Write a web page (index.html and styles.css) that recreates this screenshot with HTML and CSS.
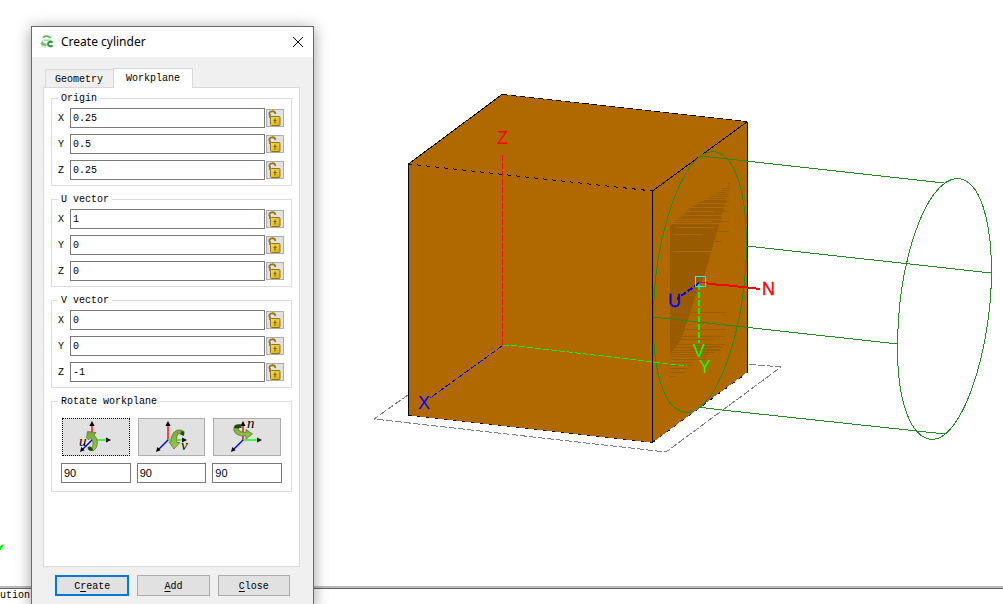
FILE: index.html
```html
<!DOCTYPE html>
<html lang="en">
<head>
<meta charset="utf-8">
<title>Create cylinder</title>
<link rel="stylesheet" href="styles.css">
</head>
<body>
<svg class="sprites" aria-hidden="true">
  <defs>
    <linearGradient id="gold" x1="0" y1="0" x2="1" y2="1"><stop offset="0" stop-color="#f3dd62"/><stop offset="1" stop-color="#d9ae10"/></linearGradient>
    <linearGradient id="leaf" x1="0" y1="0" x2="0" y2="1"><stop offset="0" stop-color="#7da63c"/><stop offset="1" stop-color="#9cc652"/></linearGradient>
    <symbol id="lock" viewBox="0 0 16 16">
      <path d="M3 8V5C1.500 4 2.500 1.500 5 1.300C7 1.100 8.300 2 8.300 4" fill="none" stroke="#94780f" stroke-width="1.800"/>
      <rect x="3.500" y="6.500" width="9.500" height="9" rx="1" fill="url(#gold)" stroke="#93740b"/>
      <path d="M8 8.500v5M6.500 10.500h3" stroke="#80640c" stroke-width="1.200"/>
    </symbol>
    <symbol id="axes" viewBox="0 0 68 38">
      <path d="M30 22V7" stroke="#f00" stroke-width="1.400"/>
      <path d="M30 22h16" stroke="#0f0" stroke-width="1.400"/>
      <path d="M30 22L20 32" stroke="#00f" stroke-width="1.400"/>
      <path d="M30 3l-2.600 5h5.200zM49 22l-5-2.600v5.200zM18 34l1.300-5 3.300 3.300z" fill="#000"/>
    </symbol>
  </defs>
</svg>

<main class="viewport">
  <svg class="scene" role="img" aria-label="Brick with cylinder preview">
    <g class="crisp thin">
      <path class="ground" d="M408 395L374 419L666 452L781 367L747 364"/>
      <path class="brick" d="M502 94.500L747.500 121.500V372L652.500 442.500L408.500 415.500V164z"/>
      <path class="shade" d="M670 225H719L713 245L709 260L704 276L699 288L694 300L690 313L685 329L679 343L670 354z"/>
      <path class="shade-lines" d="M728 183.500h2M727 186.500h2M722 188.500h7M722 190.500h7M716 192.500h11M717 194.500h12M711 196.500h17M708 198.500h18M704 200.500h23M698 202.500h28M697 204.500h27M692 206.500h36M688 208.500h36M687 210.500h38M684 212.500h38M683 214.500h39M681 216.500h41M678 218.500h44M675 220.500h46M674 222.500h46M672 224.500h47M712 231.500h17M709 241.500h13M712 221.500h17M714 211.500h15M712 201.500h17M674 312.500h53M671 329.500h55M671 336.500h54M671 339.500h42M670 344.500h56M671 347.500h52M670 350.500h50M670 352.500h45M670 354.500h38M671 356.500h36M671 359.500h34M670 362.500h24M671 365.500h22M670 368.500h18M671 372.500h14M670 376.500h6M700 201.500h25M695 205.500h30M690 209.500h34M685 213.500h37M680 217.500h41M690 349.500h30M694 346.500h26"/>
      <path class="seam" d="M675 227.500h40M673 234.500h30M673 251.500h38"/>
      <path class="edge" d="M502 94.500L408.500 164V415.500M652.500 191V442.500M747.500 121.500V373M747.500 121.500L652.500 191"/>
      <path class="edge front" d="M408.500 164L652.500 191"/>
      <path class="edge back" d="M502 94.500L747.500 121.500"/>
      <path class="edge back low" d="M408.500 415.500L652.500 442.500M652.500 442.500L747.500 372.500"/>
      <path class="cylinder" d="M701 156L719 158 944 183M747 246L991 273M653 317L898 344M698 407L722 410 945 434"/>
      <path class="cylinder" d="M957 178.500C980 179 991.500 220 991.500 273C991 350 963 438 933 439.500C910 439 897 400 897.500 344C898 264 925 180 957 178.500z"/>
      <path class="cylinder" d="M712 151.500C736 152 746.500 195 746.500 246C746 325 718 411 688 412.500C664 412 652.500 373 653.500 317C654 237 682 153 712 151.500z"/>
      <path class="axis-z" d="M502.500 155V345"/>
      <path class="axis-x" d="M502 346L430 398"/>
      <path class="axis-y" d="M503 345L518 346 687 366"/>
      <path class="axis-u" d="M699 283L677 299"/>
      <path class="axis-v" d="M699 284V343"/>
      <path class="axis-n" d="M700 282.500L715 283.500"/>
      <path class="axis-n thick" d="M707 284L725 285L760 289"/>
      <rect class="origin" x="695.500" y="276.500" width="10" height="10"/>
    </g>
    <g class="axis-labels">
      <text class="red" x="497" y="144">Z</text>
      <text class="blue" x="418" y="409">X</text>
      <text class="green" x="699" y="373">Y</text>
      <text class="green" x="693" y="357">V</text>
      <text class="blue strong" x="668" y="307">U</text>
      <text class="red strong" x="762" y="295">N</text>
    </g>
    <path class="corner-mark" d="M0 550V548L3 545"/>
  </svg>
</main>
<footer class="log">ution</footer>

<form class="dialog" aria-labelledby="dialog-title">
  <header class="titlebar">
    <svg class="logo" viewBox="0 0 16 16" aria-hidden="true">
      <path d="M4 3.500C6 1.500 10 1.500 12 4" fill="none" stroke="#55b957" stroke-width="1.800"/>
      <path d="M4 5.500h8L13 7H5z" fill="#a5d9a6"/>
      <path d="M4 6L1.500 9.500L3 11.500L7.500 12.500V9.500L4.500 9z" fill="#72c274"/>
      <path d="M2 12l5 1.500" stroke="#c0e4c0"/>
      <path d="M13.500 8.500c-2-1.300-4.500-.6-4.500 1.500 0 2.200 2.700 2.900 4.500 1.600" fill="none" stroke="#249b35" stroke-width="2"/>
    </svg>
    <h1 id="dialog-title">Create cylinder</h1>
    <button type="button" class="dismiss" aria-label="Close window"><svg viewBox="0 0 12 12"><path d="M1 1l10 10M11 1L1 11"/></svg></button>
  </header>

  <div class="body">
    <div class="tabs" role="tablist">
      <button type="button" role="tab" class="tab" aria-selected="false">Geometry</button>
      <button type="button" role="tab" class="tab current" aria-selected="true">Workplane</button>
    </div>
    <section class="panel" role="tabpanel">
      <fieldset class="group">
        <legend>Origin</legend>
        <div class="row"><label for="ox">X</label><input id="ox" value="0.25"><button type="button" class="lock" aria-label="Link origin X"><svg><use href="#lock"/></svg></button></div>
        <div class="row"><label for="oy">Y</label><input id="oy" value="0.5"><button type="button" class="lock" aria-label="Link origin Y"><svg><use href="#lock"/></svg></button></div>
        <div class="row"><label for="oz">Z</label><input id="oz" value="0.25"><button type="button" class="lock" aria-label="Link origin Z"><svg><use href="#lock"/></svg></button></div>
      </fieldset>
      <fieldset class="group">
        <legend>U vector</legend>
        <div class="row"><label for="ux">X</label><input id="ux" value="1"><button type="button" class="lock" aria-label="Link U vector X"><svg><use href="#lock"/></svg></button></div>
        <div class="row"><label for="uy">Y</label><input id="uy" value="0"><button type="button" class="lock" aria-label="Link U vector Y"><svg><use href="#lock"/></svg></button></div>
        <div class="row"><label for="uz">Z</label><input id="uz" value="0"><button type="button" class="lock" aria-label="Link U vector Z"><svg><use href="#lock"/></svg></button></div>
      </fieldset>
      <fieldset class="group">
        <legend>V vector</legend>
        <div class="row"><label for="vx">X</label><input id="vx" value="0"><button type="button" class="lock" aria-label="Link V vector X"><svg><use href="#lock"/></svg></button></div>
        <div class="row"><label for="vy">Y</label><input id="vy" value="0"><button type="button" class="lock" aria-label="Link V vector Y"><svg><use href="#lock"/></svg></button></div>
        <div class="row"><label for="vz">Z</label><input id="vz" value="-1"><button type="button" class="lock" aria-label="Link V vector Z"><svg><use href="#lock"/></svg></button></div>
      </fieldset>
      <fieldset class="group rotate">
        <legend>Rotate workplane</legend>
        <div class="rotations">
          <div class="rotation">
            <button type="button" class="turn focused" aria-label="Rotate around u">
              <svg viewBox="0 0 68 38"><use href="#axes" width="68" height="38"/>
                <path d="M24.500 20L25.500 13.500L34 14.500L32 17C36.500 21 37 29 31 33L30 29C32 26 31 22 28.500 20L26.500 22z" fill="url(#leaf)" stroke="#4b751b" stroke-width=".7"/>
                <path d="M25.500 30C27 27.500 30 28 31 32.500C29 33.500 26.500 33 25.500 30z" fill="#1c4a08"/>
                <text class="axis-name" x="17" y="28">u</text>
              </svg>
            </button>
            <input value="90" aria-label="Angle around u">
          </div>
          <div class="rotation">
            <button type="button" class="turn" aria-label="Rotate around v">
              <svg viewBox="0 0 68 38"><use href="#axes" width="68" height="38"/>
                <path d="M45.500 13C38 9.500 33 15 33 24H31L36 31L42 24.500H39C38 18 40 14 43 16z" fill="url(#leaf)" stroke="#4b751b" stroke-width=".7"/>
                <path d="M43 13.500L46.500 13.500L46 18L42.500 16.500z" fill="#1c4a08"/>
                <text class="axis-name" x="43" y="32">v</text>
              </svg>
            </button>
            <input value="90" aria-label="Angle around v">
          </div>
          <div class="rotation">
            <button type="button" class="turn" aria-label="Rotate around n">
              <svg viewBox="0 0 68 38"><use href="#axes" width="68" height="38"/>
                <path d="M21 9C19.500 15 25 18.500 33 18V21L39.500 16L33 11.500V14.500C28 14 25 13 25.500 10z" fill="url(#leaf)" stroke="#4b751b" stroke-width=".7"/>
                <path d="M21 9.500C21 6.500 24 6 28.500 6.500V10C26 9.500 23 11 21 9.500z" fill="#1c4a08"/>
                <text class="axis-name" x="34" y="10">n</text>
              </svg>
            </button>
            <input value="90" aria-label="Angle around n">
          </div>
        </div>
      </fieldset>
    </section>
    <div class="actions">
      <button type="submit" class="action primary">C<u>r</u>eate</button>
      <button type="button" class="action"><u>A</u>dd</button>
      <button type="button" class="action"><u>C</u>lose</button>
    </div>
  </div>
</form>
</body>
</html>
```
FILE: styles.css
```css
* { box-sizing: border-box; }

html, body { height: 100%; }

body {
  margin: 0;
  display: flex;
  flex-direction: column;
  overflow: hidden;
  background: #fff;
  color: #000;
  font: 10px/13px "Liberation Mono", monospace;
}

button, input { font: inherit; color: inherit; margin: 0; }
button { padding: 0; }

.sprites { position: absolute; width: 0; height: 0; }

/* 3D view */
.viewport { flex: 1; min-height: 0; display: flex; }
.scene { flex: 1; width: 100%; height: 100%; }
.crisp { shape-rendering: crispEdges; }
.thin path, .thin rect { fill: none; stroke-width: 1; }
.thin .ground { stroke: #808080; stroke-dasharray: 7 2; }
.thin .brick { fill: #b06800; }
.thin .shade { fill: #995b00; }
.thin .shade-lines { stroke: #9c5d00; }
.thin .seam { stroke: #b06800; }
.thin .edge { stroke: #000; }
.thin .front { stroke-dasharray: 4 5; }
.thin .back { stroke-dasharray: 6 3; }
.thin .low { stroke-dasharray: 3 6; }
.thin .cylinder { stroke: #228b22; }
.thin .axis-z { stroke: #f00; stroke-dasharray: 6 2; }
.thin .axis-x { stroke: #00f; stroke-dasharray: 6 2; }
.thin .axis-y { stroke: #0f0; stroke-dasharray: 6 2; }
.thin .axis-u { stroke: #00f; stroke-width: 2; stroke-dasharray: 6 2; }
.thin .axis-v { stroke: #0f0; stroke-width: 2; stroke-dasharray: 6 2; }
.thin .axis-n { stroke: #f00; }
.thin .thick { stroke-width: 2; }
.thin .origin { stroke: #0ff; }
.axis-labels { font: 18px "Liberation Sans", sans-serif; }
.red { fill: #f00; }
.blue { fill: #00f; }
.green { fill: #0f0; }
.strong.red { stroke: #f00; stroke-width: .3; }
.strong.blue { stroke: #00f; stroke-width: .3; }
.corner-mark { fill: none; stroke: #0f0; stroke-width: 2; }

.log {
  height: 18px;
  flex: none;
  padding-top: 1px;
  border-top: 2px solid #b9bbc0;
  box-shadow: inset 0 1px #696969;
  white-space: nowrap;
}

/* Dialog window */
.dialog {
  position: absolute;
  left: 31px;
  top: 26px;
  width: 283px;
  border: 1px solid #6b6b6b;
  background: #f0f0f0;
  box-shadow: 0 2px 14px rgba(0, 0, 0, .38);
}

.titlebar {
  display: flex;
  align-items: center;
  gap: 6px;
  height: 30px;
  padding: 0 9px 0 7px;
  background: #fff;
}
.logo { width: 16px; height: 16px; }
.titlebar h1 { flex: 1; margin: 0; font: 12px/16px "Noto Sans", sans-serif; }
.dismiss { display: flex; border: 0; background: none; }
.dismiss svg { width: 12px; height: 12px; fill: none; stroke: #000; }

.body { padding: 11px 13px 12px 11px; }

.tabs { display: flex; align-items: flex-end; padding-left: 2px; }
.tab {
  height: 18px;
  padding: 2px 10px 0 9px;
  border: 1px solid #d9d9d9;
  border-bottom: 0;
  background: #f0f0f0;
}
.tab.current {
  position: relative;
  height: 20px;
  margin: 0 0 -1px -1px;
  padding: 0 12px;
  background: #fff;
}

.panel {
  display: flex;
  flex-direction: column;
  gap: 7px;
  min-height: 480px;
  padding: 4px 7px;
  border: 1px solid #d9d9d9;
  background: #fff;
}

.group {
  min-width: 0;
  margin: 0;
  padding: 3px 7px 5px 6px;
  border: 1px solid #dcdcdc;
}
.group legend { padding: 0 3px; line-height: 13px; }

.row { display: flex; align-items: center; gap: 1px; }
.row + .row { margin-top: 6px; }
.row label { width: 11px; }

input {
  flex: 1;
  min-width: 0;
  height: 20px;
  padding: 0 2px;
  border: 1px solid #7a7a7a;
  border-radius: 0;
  background: #fff;
}

.lock {
  display: flex;
  width: 18px;
  height: 18px;
  border: 1px solid #adadad;
  background: #e1e1e1;
}
.lock svg { width: 16px; height: 16px; }

.rotate { padding: 10px 9px 8px; }
.group.rotate legend { margin-left: -3px; }
.rotations { display: grid; grid-template-columns: repeat(3, minmax(0, 1fr)); gap: 6px; }
.rotation { display: flex; flex-direction: column; gap: 7px; }
.rotation input { flex: none; width: 100%; font: 11px/13px "Liberation Sans", sans-serif; }
.turn {
  display: flex;
  justify-content: center;
  height: 38px;
  margin: 0 1px;
  border: 1px solid #adadad;
  background: #e1e1e1;
}
.turn.focused { border: 1px dotted #000; }
.turn svg { width: 68px; height: 38px; flex: none; margin-top: -1px; overflow: visible; }
.axis-name { font: italic 15px "Liberation Serif", serif; }

.actions { display: flex; gap: 8px; padding: 8px 10px 0 12px; }
.action {
  flex: 1;
  height: 21px;
  padding-top: 2px;
  border: 1px solid #adadad;
  background: #e1e1e1;
}
.action.primary { border: 2px solid #0078d7; }
.action u { text-underline-offset: 2px; }
```
